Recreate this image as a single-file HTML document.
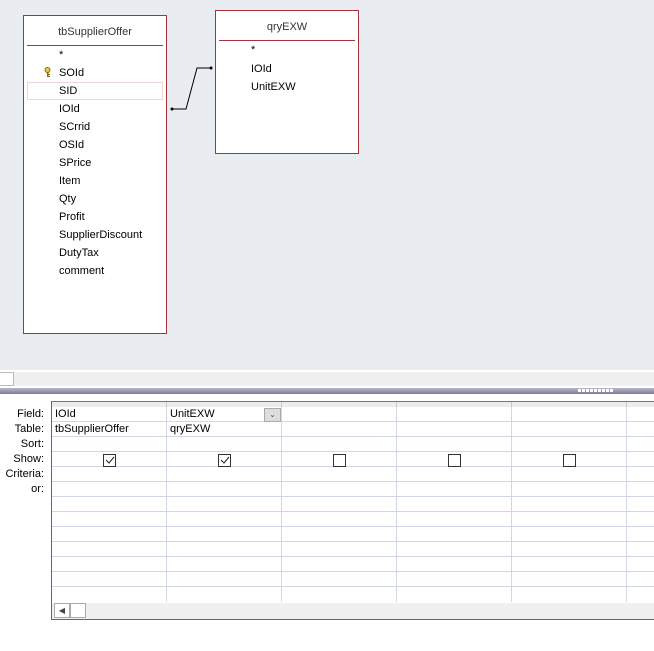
<!DOCTYPE html>
<html><head><style>
*{margin:0;padding:0;box-sizing:border-box}
body{width:654px;height:651px;position:relative;overflow:hidden;background:#fff;font-family:"Liberation Sans",sans-serif;font-size:11px;color:#000}
.a{position:absolute}
.top{left:0;top:0;width:654px;height:370px;background:#e9ecf0}
.tbl{background:#fff;border:1px solid #a83238}
.t{position:absolute;white-space:nowrap;line-height:13px}
.lab{position:absolute;right:610px;text-align:right;line-height:13px}
.cb{position:absolute;width:13px;height:13px;border:1px solid #333;background:#fff}
</style></head><body>
<div class="a top"></div>
<div class="a tbl" style="left:23px;top:15px;width:144px;height:319px">
 <div class="t" style="left:0;width:142px;text-align:center;top:10px;color:#333">tbSupplierOffer</div>
 <div class="a" style="left:3px;top:29px;width:136px;height:1px;background:#a83238"></div>
 <div class="a" style="left:3px;top:66px;width:136px;height:18px;border:1px solid #f3d3d5"></div>
 <svg class="a" style="left:20px;top:51px" width="7" height="11"><circle cx="3.5" cy="3" r="2.5" fill="#e8c84a" stroke="#8a6a10" stroke-width="1"/><rect x="3" y="5" width="1.5" height="5" fill="#8a6a10"/><rect x="4" y="7" width="2" height="1" fill="#8a6a10"/><rect x="4" y="9" width="2" height="1" fill="#8a6a10"/></svg>
 <div class="t" style="left:35px;top:33px">*</div>
 <div class="t" style="left:35px;top:51px">SOId</div>
 <div class="t" style="left:35px;top:69px">SID</div>
 <div class="t" style="left:35px;top:87px">IOId</div>
 <div class="t" style="left:35px;top:105px">SCrrid</div>
 <div class="t" style="left:35px;top:123px">OSId</div>
 <div class="t" style="left:35px;top:141px">SPrice</div>
 <div class="t" style="left:35px;top:159px">Item</div>
 <div class="t" style="left:35px;top:177px">Qty</div>
 <div class="t" style="left:35px;top:195px">Profit</div>
 <div class="t" style="left:35px;top:213px">SupplierDiscount</div>
 <div class="t" style="left:35px;top:231px">DutyTax</div>
 <div class="t" style="left:35px;top:249px">comment</div>
</div>
<div class="a tbl" style="left:215px;top:10px;width:144px;height:144px">
 <div class="t" style="left:0;width:142px;text-align:center;top:10px;color:#333">qryEXW</div>
 <div class="a" style="left:3px;top:29px;width:136px;height:1px;background:#a83238"></div>
 <div class="t" style="left:35px;top:33px">*</div>
 <div class="t" style="left:35px;top:52px">IOId</div>
 <div class="t" style="left:35px;top:70px">UnitEXW</div>
</div>
<svg class="a" style="left:0;top:0" width="654" height="370"><polyline points="172,109 186,109 197,68 211,68" fill="none" stroke="#000" stroke-width="1"/><circle cx="172" cy="109" r="1.5"/><circle cx="211" cy="68" r="1.5"/></svg>
<div class="a" style="left:0;top:372px;width:654px;height:14px;background:#f0f0f0"></div>
<div class="a" style="left:0;top:372px;width:14px;height:14px;background:#fff;border:1px solid #bbb;border-left:none"></div>
<div class="a" style="left:0;top:388px;width:654px;height:6px;background:linear-gradient(#b8b8cc,#7a7a95)"></div>
<div class="a" style="left:578px;top:389px;width:36px;height:3px;background:repeating-linear-gradient(90deg,#fff 0 3px,transparent 3px 4px)"></div>
<div class="a" style="left:51px;top:401px;width:603px;height:219px;border-left:1px solid #666;border-top:1px solid #777;border-bottom:1px solid #666"></div>
<div class="a" style="left:52px;top:402px;width:602px;height:5px;background:#ececec"></div>
<svg class="a" style="left:0;top:0" width="654" height="651">
<g stroke="#d0d7e5" stroke-width="1">
<line x1="52" y1="421.5" x2="654" y2="421.5"/><line x1="52" y1="436.5" x2="654" y2="436.5"/><line x1="52" y1="451.5" x2="654" y2="451.5"/><line x1="52" y1="466.5" x2="654" y2="466.5"/><line x1="52" y1="481.5" x2="654" y2="481.5"/><line x1="52" y1="496.5" x2="654" y2="496.5"/><line x1="52" y1="511.5" x2="654" y2="511.5"/><line x1="52" y1="526.5" x2="654" y2="526.5"/><line x1="52" y1="541.5" x2="654" y2="541.5"/><line x1="52" y1="556.5" x2="654" y2="556.5"/><line x1="52" y1="571.5" x2="654" y2="571.5"/><line x1="52" y1="586.5" x2="654" y2="586.5"/>
<line x1="166.5" y1="407" x2="166.5" y2="602"/><line x1="281.5" y1="407" x2="281.5" y2="602"/><line x1="396.5" y1="407" x2="396.5" y2="602"/><line x1="511.5" y1="407" x2="511.5" y2="602"/><line x1="626.5" y1="407" x2="626.5" y2="602"/>
</g>
<g stroke="#c8c8c8"><line x1="166.5" y1="402" x2="166.5" y2="407"/><line x1="281.5" y1="402" x2="281.5" y2="407"/><line x1="396.5" y1="402" x2="396.5" y2="407"/><line x1="511.5" y1="402" x2="511.5" y2="407"/><line x1="626.5" y1="402" x2="626.5" y2="407"/></g>
</svg>
<div class="a" style="left:52px;top:603px;width:602px;height:16px;background:#f0f0f0"></div>
<div class="a" style="left:54px;top:603px;width:16px;height:15px;border:1px solid #aaa;background:#fff;font-size:8px;line-height:13px;text-align:center;color:#444">&#9664;</div>
<div class="a" style="left:70px;top:603px;width:16px;height:15px;border:1px solid #aaa;background:#fff"></div>
<div class="lab" style="top:408px">Field:</div>
<div class="lab" style="top:423px">Table:</div>
<div class="lab" style="top:438px">Sort:</div>
<div class="lab" style="top:453px">Show:</div>
<div class="lab" style="top:468px">Criteria:</div>
<div class="lab" style="top:483px">or:</div>
<div class="t" style="left:55px;top:408px">IOId</div>
<div class="t" style="left:170px;top:408px">UnitEXW</div>
<div class="t" style="left:55px;top:423px">tbSupplierOffer</div>
<div class="t" style="left:170px;top:423px">qryEXW</div>
<div class="a" style="left:264px;top:408px;width:17px;height:14px;background:#ddd;border:1px solid #aaa;font-size:8px;text-align:center;line-height:12px;color:#555">&#8964;</div>
<div class="cb" style="left:103px;top:454px"></div>
<div class="cb" style="left:218px;top:454px"></div>
<div class="cb" style="left:333px;top:454px"></div>
<div class="cb" style="left:448px;top:454px"></div>
<div class="cb" style="left:563px;top:454px"></div>
<svg class="a" style="left:0;top:0" width="654" height="651"><g stroke="#222" fill="none" stroke-width="1"><polyline points="106,460 109,463 114,457"/><polyline points="221,460 224,463 229,457"/></g></svg>
</body></html>
